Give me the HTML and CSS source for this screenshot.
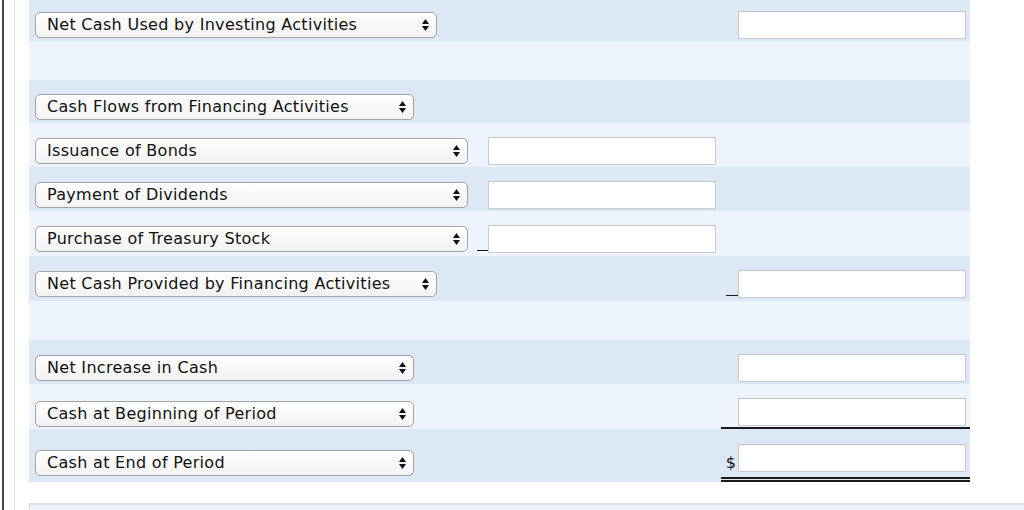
FILE: index.html
```html
<!DOCTYPE html>
<html lang="en">
<head>
<meta charset="utf-8">
<title>Statement of Cash Flows</title>
<link rel="stylesheet" href="styles.css">
</head>
<body>
<div class="frame">
  <div class="inner">
    <div class="row dark first">
      <div class="select w402"><span class="opt">Net Cash Used by Investing Activities</span><svg class="arr" viewBox="0 0 7 12" width="7" height="12"><polygon points="0,5 3.5,0 7,5"/><polygon points="0,7 3.5,12 7,7"/></svg></div>
      <div class="tot"><span class="mark"></span><span class="field"></span></div>
    </div>
    <div class="row light empty"></div>
    <div class="row dark r43">
      <div class="select w379"><span class="opt">Cash Flows from Financing Activities</span><svg class="arr" viewBox="0 0 7 12" width="7" height="12"><polygon points="0,5 3.5,0 7,5"/><polygon points="0,7 3.5,12 7,7"/></svg></div>
    </div>
    <div class="row light">
      <div class="select w433"><span class="opt">Issuance of Bonds</span><svg class="arr" viewBox="0 0 7 12" width="7" height="12"><polygon points="0,5 3.5,0 7,5"/><polygon points="0,7 3.5,12 7,7"/></svg></div>
      <span class="field mid"></span>
    </div>
    <div class="row dark">
      <div class="select w433"><span class="opt">Payment of Dividends</span><svg class="arr" viewBox="0 0 7 12" width="7" height="12"><polygon points="0,5 3.5,0 7,5"/><polygon points="0,7 3.5,12 7,7"/></svg></div>
      <span class="field mid"></span>
    </div>
    <div class="row light tall">
      <div class="select w433"><span class="opt">Purchase of Treasury Stock</span><svg class="arr" viewBox="0 0 7 12" width="7" height="12"><polygon points="0,5 3.5,0 7,5"/><polygon points="0,7 3.5,12 7,7"/></svg></div>
      <span class="dash colb"></span>
      <span class="field mid"></span>
    </div>
    <div class="row dark tall">
      <div class="select w402"><span class="opt">Net Cash Provided by Financing Activities</span><svg class="arr" viewBox="0 0 7 12" width="7" height="12"><polygon points="0,5 3.5,0 7,5"/><polygon points="0,7 3.5,12 7,7"/></svg></div>
      <div class="tot"><span class="mark"><span class="dash short"></span></span><span class="field"></span></div>
    </div>
    <div class="row light empty"></div>
    <div class="row dark">
      <div class="select w379"><span class="opt">Net Increase in Cash</span><svg class="arr" viewBox="0 0 7 12" width="7" height="12"><polygon points="0,5 3.5,0 7,5"/><polygon points="0,7 3.5,12 7,7"/></svg></div>
      <div class="tot"><span class="mark"></span><span class="field"></span></div>
    </div>
    <div class="row light sumrow">
      <div class="select w379"><span class="opt">Cash at Beginning of Period</span><svg class="arr" viewBox="0 0 7 12" width="7" height="12"><polygon points="0,5 3.5,0 7,5"/><polygon points="0,7 3.5,12 7,7"/></svg></div>
      <div class="tot sum"><span class="mark"></span><span class="field"></span></div>
    </div>
    <div class="row dark grandrow">
      <div class="select w379"><span class="opt">Cash at End of Period</span><svg class="arr" viewBox="0 0 7 12" width="7" height="12"><polygon points="0,5 3.5,0 7,5"/><polygon points="0,7 3.5,12 7,7"/></svg></div>
      <div class="tot grand"><span class="mark"><span class="dollar">$</span></span><span class="field"></span></div>
    </div>
    <div class="nextbox"></div>
  </div>
</div>
</body>
</html>
```
FILE: styles.css
```css
html, body {
  margin: 0;
  padding: 0;
  background: #ffffff;
  overflow: hidden;
}
body {
  font-family: "DejaVu Sans", Verdana, sans-serif;
  font-size: 16px;
  color: #111111;
}
.frame {
  margin-left: 2px;
  border-left: 2px solid #454545;
  padding-left: 10px;
  min-height: 510px;
}
.inner {
  border-left: 1px solid #dce3ec;
  padding-left: 14px;
  min-height: 510px;
}
.row {
  box-sizing: border-box;
  width: 941px;
  display: grid;
  grid-template-columns: 442px 11px 228px 5px 249px;
  grid-auto-rows: minmax(28px, auto);
  align-items: center;
  padding: 14px 0 2px 6px;
}
.row.first { padding-top: 11px; }
.row.r43 { padding-top: 13px; }
.row.tall { padding-bottom: 3px; }
.row.empty { height: 39px; padding: 0; }
.row.sumrow { padding-bottom: 0; }
.row.grandrow { padding-top: 15px; padding-bottom: 0; }
.dark { background: #dde8f7; }
.light { background: #edf4fd; }

.select {
  grid-column: 1;
  box-sizing: border-box;
  height: 26px;
  border: 1px solid #a3a3a3;
  border-radius: 5px;
  background: linear-gradient(#ffffff, #f2f2f2);
  display: flex;
  align-items: center;
  justify-content: space-between;
  padding: 0 7px 0 11px;
  white-space: nowrap;
}
.w402 { width: 402px; }
.w379 { width: 379px; }
.w433 { width: 433px; }
.opt { line-height: 1; letter-spacing: 0.3px; }
.arr { fill: #111111; flex: none; }

.field {
  display: block;
  box-sizing: border-box;
  width: 228px;
  height: 28px;
  background: #ffffff;
  border: 1px solid #cbcbcb;
  border-top-color: #c2c2c2;
  flex: none;
}
.field.mid { grid-column: 3; }

.dash {
  display: block;
  height: 0;
  border-bottom: 1px solid #1a1a1a;
}
.dash.colb {
  grid-column: 2;
  align-self: end;
  margin-bottom: 2px;
}
.dash.short { width: 12px; margin-bottom: 2px; }

.tot {
  grid-column: 5;
  display: flex;
  align-items: flex-end;
  padding-right: 4px;
}
.tot.sum {
  padding-bottom: 1px;
  border-bottom: 2px solid #1a1a1a;
}
.tot.grand {
  padding-bottom: 5px;
  border-bottom: 5px double #1a1a1a;
}
.mark {
  width: 17px;
  flex: none;
  display: flex;
  justify-content: flex-end;
  align-items: flex-end;
  align-self: stretch;
}
.dollar {
  font-size: 16px;
  line-height: 16px;
  letter-spacing: 0;
  margin-right: 2px;
  margin-bottom: 1px;
}
.nextbox {
  margin-top: 21px;
  height: 60px;
  border-top: 2px solid #d7dce2;
  border-left: 1px solid #d7dce2;
  background: #eef3fa;
}
```
